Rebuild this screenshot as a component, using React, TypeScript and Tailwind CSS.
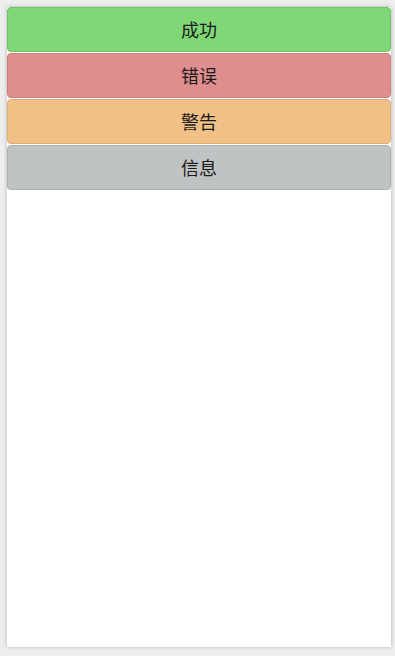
export default function App() {
  const items = [
    { label: '成功', cls: 'bg-[#80d776] border-[#6fc466]' },
    { label: '错误', cls: 'bg-[#e08d8e] border-[#cc7c7d]' },
    { label: '警告', cls: 'bg-[#f0c087] border-[#dcae77]' },
    { label: '信息', cls: 'bg-[#c0c3c4] border-[#aeb1b2]' },
  ];

  return (
    <div className="h-[656px] bg-[#eeeeee] p-[7px] pb-[9px] pr-[4px]" style={{ fontFamily: '"Noto Sans CJK SC", sans-serif' }}>
      <div className="h-full bg-white shadow-[0_0_4px_rgba(0,0,0,0.25)]">
        {items.map((item) => (
          <div
            key={item.label}
            className={`flex h-[45px] mb-[1px] items-center justify-center rounded-[4px] border text-[18px] text-[#1a1a1a] ${item.cls}`}
          >
            {item.label}
          </div>
        ))}
      </div>
    </div>
  );
}
